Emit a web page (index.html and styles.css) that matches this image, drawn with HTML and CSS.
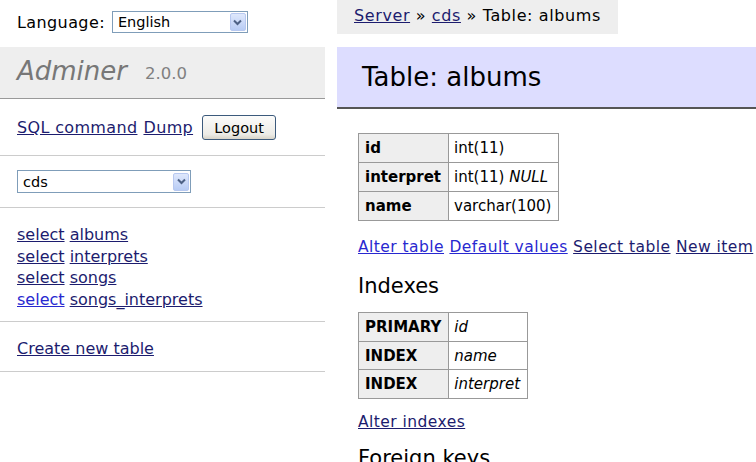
FILE: index.html
```html
<!DOCTYPE html>
<html>
<head>
<meta charset="utf-8">
<title>Table: albums - Adminer</title>
<link rel="stylesheet" href="styles.css">
</head>
<body>
<div class="page">
  <div class="menu">
    <div class="lang">
      <span class="lang-label">Language:</span>
      <span class="fake-select lang-select"><span class="sel-text">English</span><span class="sel-btn"><svg width="9" height="7" viewBox="0 0 9 7"><path d="M1 1.5 L4.5 5 L8 1.5" fill="none" stroke="#4d6185" stroke-width="2"/></svg></span></span>
    </div>
    <h1 class="logo">Adminer <span class="version">2.0.0</span></h1>
    <div class="sec sec-cmd">
      <a href="#" class="lnk">SQL command</a> <a href="#" class="lnk">Dump</a>
      <button class="btn">Logout</button>
    </div>
    <div class="sec sec-db">
      <span class="fake-select db-select"><span class="sel-text">cds</span><span class="sel-btn"><svg width="9" height="7" viewBox="0 0 9 7"><path d="M1 1.5 L4.5 5 L8 1.5" fill="none" stroke="#4d6185" stroke-width="2"/></svg></span></span>
    </div>
    <div class="sec sec-tables">
      <div><a href="#" class="lnk">select</a> <a href="#" class="lnk">albums</a></div>
      <div><a href="#" class="lnk">select</a> <a href="#" class="lnk">interprets</a></div>
      <div><a href="#" class="lnk">select</a> <a href="#" class="lnk">songs</a></div>
      <div><a href="#" class="lnk new">select</a> <a href="#" class="lnk">songs_interprets</a></div>
    </div>
    <div class="sec sec-create">
      <a href="#" class="lnk">Create new table</a>
    </div>
  </div>
  <div class="content">
    <div class="crumbs"><a href="#" class="lnk">Server</a> » <a href="#" class="lnk">cds</a> » Table: albums</div>
    <h2 class="title">Table: albums</h2>
    <table class="grid">
      <tr><th>id</th><td>int(11)</td></tr>
      <tr><th>interpret</th><td>int(11) <i>NULL</i></td></tr>
      <tr><th>name</th><td>varchar(100)</td></tr>
    </table>
    <p class="links"><a href="#" class="lnk new">Alter table</a> <a href="#" class="lnk new">Default values</a> <a href="#" class="lnk">Select table</a> <a href="#" class="lnk">New item</a></p>
    <h3 class="sub">Indexes</h3>
    <table class="grid idx">
      <tr><th>PRIMARY</th><td><i>id</i></td></tr>
      <tr><th>INDEX</th><td><i>name</i></td></tr>
      <tr><th>INDEX</th><td><i>interpret</i></td></tr>
    </table>
    <p class="links links-idx"><a href="#" class="lnk">Alter indexes</a></p>
    <h3 class="sub sub-fk">Foreign keys</h3>
  </div>
</div>
</body>
</html>
```
FILE: styles.css
```css
html, body {
  margin: 0;
  padding: 0;
  background: #fff;
  overflow: hidden;
}
body {
  font-family: "DejaVu Sans", Verdana, sans-serif;
  font-size: 16px;
  color: #000;
}
.page {
  display: flex;
  align-items: flex-start;
  gap: 12px;
  width: 756px;
  height: 462px;
  overflow: hidden;
}
.menu {
  width: 325px;
  flex: none;
}
.lnk {
  color: #1c1c6e;
  text-decoration: underline;
}
.lnk.new {
  color: #2828d0;
}
.lang {
  height: 47px;
  padding-left: 17px;
  display: flex;
  align-items: center;
  gap: 7px;
  box-sizing: border-box;
  padding-bottom: 3px;
}
.lang-label {
  font-size: 16px;
  letter-spacing: 0.4px;
}
.fake-select {
  display: inline-flex;
  align-items: center;
  justify-content: space-between;
  border: 1px solid #7f9db9;
  background: #fff;
  box-sizing: border-box;
  font-size: 14.5px;
  padding: 1px 1px 1px 5px;
}
.lang-select {
  width: 136px;
  height: 22px;
}
.db-select {
  width: 174px;
  height: 23px;
}
.sel-btn {
  width: 16px;
  height: 18px;
  border: 1px solid #b7c8f0;
  border-radius: 2px;
  background: linear-gradient(#dfe8fc, #b8ccf5);
  box-sizing: border-box;
  display: flex;
  align-items: center;
  justify-content: center;
}
.logo {
  margin: 0;
  height: 52px;
  background: #eee;
  border-bottom: 1px solid #999;
  box-sizing: border-box;
  padding-left: 17px;
  display: flex;
  align-items: center;
  font-weight: normal;
  font-style: italic;
  font-size: 26px;
  color: #777;
  padding-bottom: 3px;
}
.version {
  font-style: normal;
  font-size: 16.5px;
  margin-left: 18px;
  margin-top: 4px;
  color: #808080;
}
.sec {
  border-bottom: 1px solid #ccc;
  padding-left: 17px;
  box-sizing: border-box;
}
.sec-cmd {
  height: 57px;
  display: flex;
  align-items: center;
  gap: 6px;
  padding-top: 1px;
  letter-spacing: 0.35px;
}
.btn {
  font-family: "DejaVu Sans", Verdana, sans-serif;
  font-size: 14.5px;
  height: 25px;
  width: 74px;
  border: 1px solid #3c5a7c;
  border-radius: 3px;
  background: linear-gradient(#fcfcfb, #ecebe6 80%, #d8d4c8);
  margin-left: 3px;
  padding: 0;
  color: #000;
  letter-spacing: 0;
}
.sec-db {
  height: 52px;
  display: flex;
  align-items: center;
}
.sec-tables {
  height: 114px;
  padding-top: 16px;
  line-height: 21.5px;
}
.sec-create {
  height: 50px;
  display: flex;
  align-items: center;
  padding-top: 3px;
}
.content {
  flex: 1;
  min-width: 0;
}
.crumbs {
  display: inline-block;
  background: #eee;
  height: 34px;
  line-height: 32px;
  padding: 0 17px 0 17px;
  box-sizing: border-box;
  font-size: 16px;
  letter-spacing: 0.6px;
  white-space: nowrap;
}
.title {
  margin: 13px 0 0 0;
  height: 62px;
  background: #ddf;
  border-bottom: 2px solid #555;
  box-sizing: border-box;
  padding-left: 25px;
  display: flex;
  align-items: center;
  font-weight: normal;
  font-size: 26px;
  white-space: nowrap;
}
.grid {
  border-collapse: collapse;
  margin: 24px 0 0 21px;
  font-size: 15px;
}
.grid th, .grid td {
  border: 1px solid #999;
  height: 29px;
  padding: 0 7px 0 5px;
  text-align: left;
  box-sizing: border-box;
  white-space: nowrap;
}
.grid th {
  background: #eee;
  padding-left: 6px;
}
.links {
  margin: 0;
  padding: 17px 0 0 21px;
  white-space: nowrap;
  font-size: 15.5px;
  letter-spacing: 0.45px;
}
.sub {
  margin: 0;
  padding: 18px 0 0 21px;
  font-weight: normal;
  font-size: 21px;
}
.idx {
  margin-top: 14px;
}
.idx th, .idx td {
  height: 28.7px;
}
.idx td {
  padding-right: 7px;
}
.links-idx {
  padding-top: 14px;
}
.sub-fk {
  padding-top: 15px;
}
```
